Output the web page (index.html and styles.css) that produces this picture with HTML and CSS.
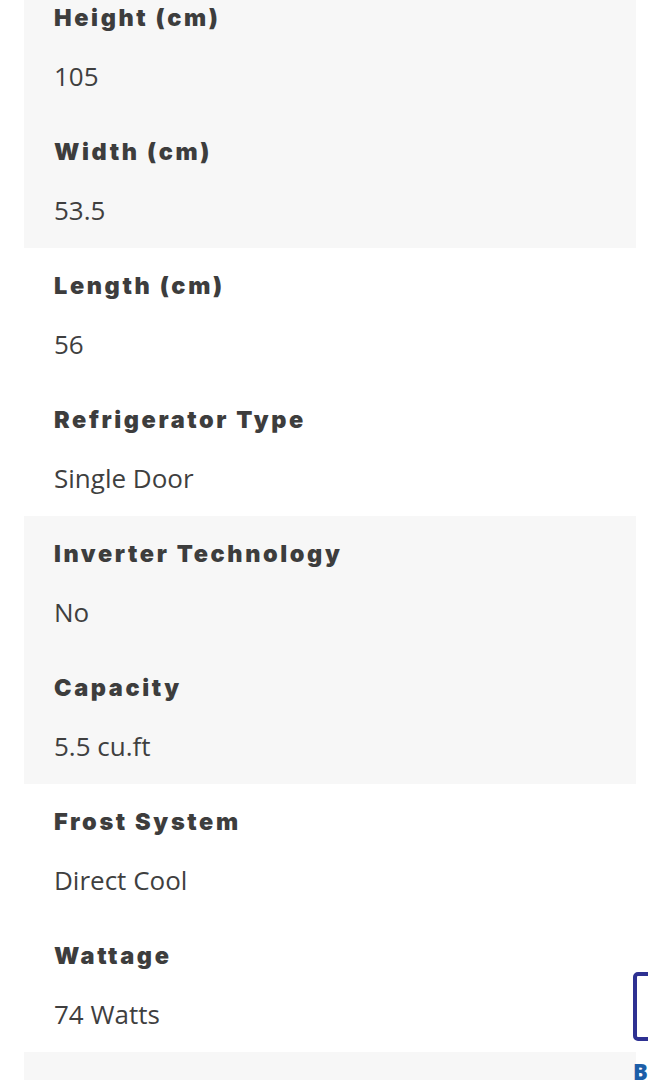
FILE: index.html
```html
<!DOCTYPE html>
<html>
<head>
<meta charset="utf-8">
<link rel="stylesheet" href="styles.css">
</head>
<body>
<div class="specs">
  <div class="block gray">
    <div class="item"><div class="label">Height (cm)</div><div class="value">105</div></div>
    <div class="item"><div class="label">Width (cm)</div><div class="value">53.5</div></div>
  </div>
  <div class="block">
    <div class="item"><div class="label">Length (cm)</div><div class="value">56</div></div>
    <div class="item"><div class="label">Refrigerator Type</div><div class="value">Single Door</div></div>
  </div>
  <div class="block gray">
    <div class="item"><div class="label">Inverter Technology</div><div class="value">No</div></div>
    <div class="item"><div class="label">Capacity</div><div class="value">5.5 cu.ft</div></div>
  </div>
  <div class="block">
    <div class="item"><div class="label">Frost System</div><div class="value">Direct Cool</div></div>
    <div class="item"><div class="label">Wattage</div><div class="value">74 Watts</div></div>
  </div>
  <div class="block gray">
    <div class="item"><div class="label">Brand</div><div class="value">Sharp</div></div>
  </div>
</div>
<div class="widget">
  <div class="widget-box"></div>
  <div class="widget-text">B</div>
</div>
</body>
</html>
```
FILE: styles.css
```css
html, body {
  margin: 0;
  padding: 0;
  background: #ffffff;
  overflow: hidden;
}
body {
  width: 648px;
  height: 1080px;
  position: relative;
}
.specs {
  margin: -20px 12px 0 24px;
  display: flex;
  flex-direction: column;
}
.block {
  display: flex;
  flex-direction: column;
}
.block.gray {
  background: #f7f7f7;
}
.item {
  padding: 23px 30px 23px;
}
.label {
  font-family: "Inter", sans-serif;
  font-weight: 900;
  font-size: 23.5px;
  line-height: 30px;
  letter-spacing: 2.6px;
  color: #3d3d3d;
  margin-bottom: 28px;
  white-space: nowrap;
}
.value {
  font-family: "Open Sans", sans-serif;
  font-size: 26px;
  line-height: 30px;
  color: #3f3f3f;
  white-space: nowrap;
}
.widget {
  position: absolute;
  left: 633px;
  top: 972px;
}
.widget-box {
  width: 40px;
  height: 61px;
  border: 4.5px solid #2e3192;
  border-radius: 5px;
}
.widget-text {
  margin-top: 19px;
  font-family: "Open Sans", sans-serif;
  font-weight: 800;
  font-size: 22px;
  line-height: 22px;
  color: #1c5ea8;
}
```
